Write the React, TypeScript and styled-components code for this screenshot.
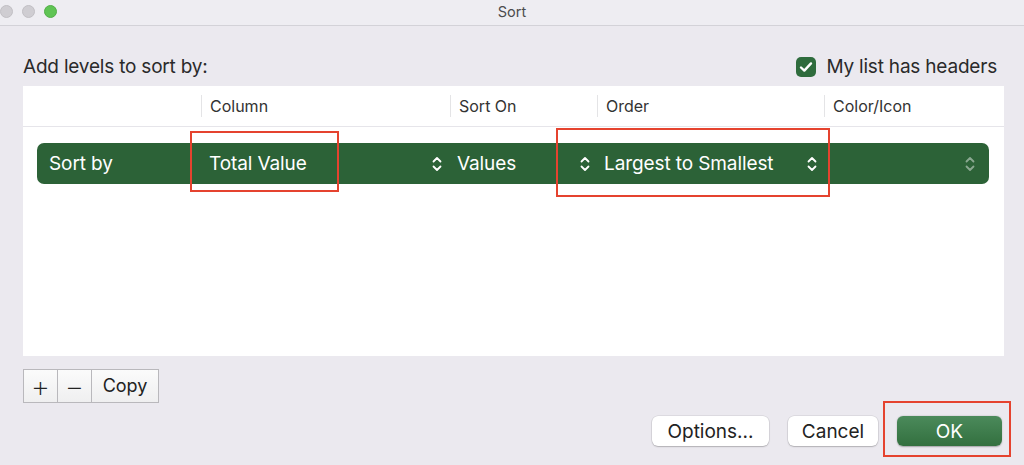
import React from "react";
import styled, { createGlobalStyle } from "styled-components";

const GlobalStyle = createGlobalStyle`
  body {
    margin: 0;
    background: #ebe9ef;
    font-family: Inter, "Liberation Sans", sans-serif;
    -webkit-font-smoothing: antialiased;
  }
`;

type Column = { label: string; value: string; dim?: boolean };

const columns: Column[] = [
  { label: "Column", value: "Total Value" },
  { label: "Sort On", value: "Values" },
  { label: "Order", value: "Largest to Smallest" },
  { label: "Color/Icon", value: "", dim: true },
];

const Stepper = ({ dim }: { dim?: boolean }) => (
  <svg width="12" height="18" viewBox="0 0 12 18" fill="none">
    <path
      d="M2.5 6.5 L6 3 L9.5 6.5 M2.5 11.5 L6 15 L9.5 11.5"
      stroke={dim ? "rgba(255,255,255,0.45)" : "#fff"}
      strokeWidth="1.8"
      strokeLinecap="round"
      strokeLinejoin="round"
    />
  </svg>
);

export default function App() {
  return (
    <>
      <GlobalStyle />
      <Window>
        <TitleBar>
          <Lights>
            <Light />
            <Light />
            <Light $color="#5fc454" />
          </Lights>
          <Title>Sort</Title>
        </TitleBar>

        <Content>
          <TopRow>
            <Label>Add levels to sort by:</Label>
            <CheckLabel>
              <CheckBox>
                <svg width="14" height="12" viewBox="0 0 14 12">
                  <path
                    d="M2 6.5 L5.3 9.6 L12 2.4"
                    stroke="#fff"
                    strokeWidth="2.4"
                    fill="none"
                    strokeLinecap="round"
                    strokeLinejoin="round"
                  />
                </svg>
              </CheckBox>
              My list has headers
            </CheckLabel>
          </TopRow>

          <Panel>
            <HeaderRow>
              <span />
              {columns.map((c) => (
                <HeaderCell key={c.label}>{c.label}</HeaderCell>
              ))}
            </HeaderRow>
            <Rows>
              <LevelRow>
                <RowCell>Sort by</RowCell>
                {columns.map((c, i) => (
                  <PopupCell key={c.label} $first={i === 0}>
                    <span>{c.value}</span>
                    <Stepper dim={c.dim} />
                  </PopupCell>
                ))}
              </LevelRow>
            </Rows>
            <Marker $left={167} $top={45} $width={149} $height={61} />
            <Marker $left={533} $top={42} $width={274} $height={69} />
          </Panel>

          <Segmented>
            <SegButton $wide={false}>+</SegButton>
            <SegButton $wide={false}>−</SegButton>
            <SegButton $wide>Copy</SegButton>
          </Segmented>

          <Footer>
            <PushButton $width={117}>Options...</PushButton>
            <PushButton $width={90}>Cancel</PushButton>
            <PrimaryWrap>
              <PushButton $width={105} $primary>
                OK
              </PushButton>
              <Marker $left={-14} $top={-15} $width={128} $height={56} />
            </PrimaryWrap>
          </Footer>
        </Content>
      </Window>
    </>
  );
}

const Window = styled.div`
  width: 1024px;
  height: 465px;
  overflow: hidden;
  background: #ebe9ef;
`;

const TitleBar = styled.div`
  height: 25px;
  border-bottom: 1px solid #d3d2d8;
  background: #eeedf2;
  display: grid;
  grid-template-columns: 1fr auto 1fr;
  align-items: center;
`;

const Lights = styled.div`
  display: flex;
  gap: 9px;
  margin-top: -2px;
`;

const Light = styled.span<{ $color?: string }>`
  width: 13px;
  height: 13px;
  border-radius: 50%;
  background: ${(p) => p.$color || "#cfcdd2"};
  border: 0.5px solid ${(p) => (p.$color ? "#52ae48" : "#c1bfc4")};
  box-sizing: border-box;
`;

const Title = styled.div`
  font-size: 14.5px;
  color: #4b4b4d;
  margin-top: -3px;
`;

const Content = styled.div`
  padding: 0 20px 0 23px;
`;

const TopRow = styled.div`
  height: 60px;
  display: flex;
  justify-content: space-between;
  align-items: flex-end;
  padding-bottom: 8px;
  box-sizing: border-box;
`;

const Label = styled.div`
  font-size: 19px;
  color: #2a2a2a;
  letter-spacing: -0.2px;
`;

const CheckLabel = styled.label`
  display: flex;
  align-items: center;
  gap: 10px;
  font-size: 19px;
  color: #2a2a2a;
  letter-spacing: -0.2px;
  margin-right: 7px;
`;

const CheckBox = styled.span`
  width: 20px;
  height: 20px;
  border-radius: 5px;
  background: #2f6c3d;
  display: flex;
  align-items: center;
  justify-content: center;
`;

const Panel = styled.div`
  position: relative;
  height: 270px;
  background: #fff;
`;

const HeaderRow = styled.div`
  display: grid;
  grid-template-columns: 178px 249px 147px 227px 1fr;
  height: 40px;
  align-items: center;
  border-bottom: 1px solid #e6e5ea;
`;

const HeaderCell = styled.div`
  border-left: 1px solid #e4e4e6;
  padding-left: 8px;
  line-height: 22px;
  font-size: 16px;
  color: #333;
`;

const Rows = styled.div`
  padding: 16px 15px 0 14px;
`;

const LevelRow = styled.div`
  display: grid;
  grid-template-columns: 164px 249px 147px 227px 1fr;
  height: 41px;
  border-radius: 7px;
  background: #2c6237;
  color: #fff;
  font-size: 19px;
  letter-spacing: -0.1px;
  align-items: center;
`;

const RowCell = styled.div`
  padding-left: 12px;
`;

const PopupCell = styled.div<{ $first: boolean }>`
  display: flex;
  align-items: center;
  justify-content: space-between;
  padding-left: ${(p) => (p.$first ? 8 : 7)}px;
  padding-right: ${(p) => (p.$first ? 7 : 6)}px;
  &:last-child {
    padding-right: 13px;
  }
`;

const Marker = styled.div<{ $left: number; $top: number; $width: number; $height: number }>`
  position: absolute;
  left: ${(p) => p.$left}px;
  top: ${(p) => p.$top}px;
  width: ${(p) => p.$width}px;
  height: ${(p) => p.$height}px;
  border: 2px solid #e5432f;
  box-sizing: border-box;
  pointer-events: none;
`;

const Segmented = styled.div`
  display: inline-flex;
  margin-top: 13px;
  border: 1px solid #b9b8bc;
  background: linear-gradient(#fbfbfb, #efeff0);
  height: 34px;
  box-sizing: border-box;
`;

const SegButton = styled.div<{ $wide: boolean }>`
  width: ${(p) => (p.$wide ? 66 : 33)}px;
  display: flex;
  align-items: center;
  justify-content: center;
  font-size: ${(p) => (p.$wide ? 18 : 30)}px;
  font-weight: ${(p) => (p.$wide ? 400 : 200)};
  line-height: 1;
  color: #222;
  & + & {
    border-left: 1px solid #b9b8bc;
  }
`;

const Footer = styled.div`
  display: flex;
  justify-content: flex-end;
  gap: 19px;
  margin-top: 13px;
  padding-right: 2px;
`;

const PrimaryWrap = styled.div`
  position: relative;
`;

const PushButton = styled.div<{ $width: number; $primary?: boolean }>`
  width: ${(p) => p.$width}px;
  height: 30px;
  border-radius: 6px;
  display: flex;
  align-items: center;
  justify-content: center;
  font-size: 19px;
  color: ${(p) => (p.$primary ? "#fff" : "#222")};
  background: ${(p) =>
    p.$primary ? "linear-gradient(#4b8a5b, #33703f)" : "#ffffff"};
  box-shadow: ${(p) =>
    p.$primary
      ? "0 0.5px 1.5px rgba(0,0,0,0.3)"
      : "0 0 0 0.5px rgba(0,0,0,0.12), 0 1px 1.5px rgba(0,0,0,0.2)"};
`;
